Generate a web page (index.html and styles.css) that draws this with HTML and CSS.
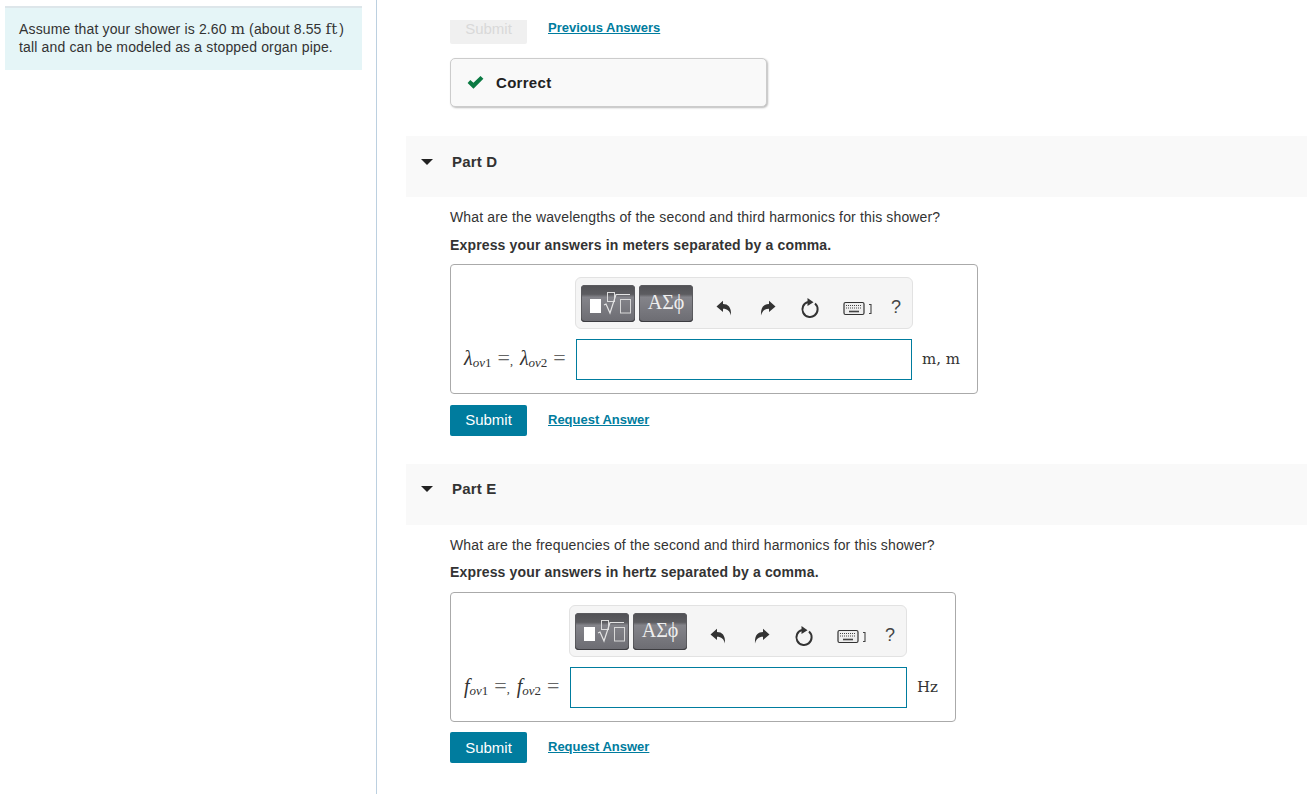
FILE: index.html
```html
<!DOCTYPE html>
<html lang="en">
<head>
  <meta charset="UTF-8" />
  <meta name="viewport" content="width=device-width, initial-scale=1" />
  <title>Standing Waves in a Shower</title>
  <link rel="stylesheet" href="styles.css">
</head>
<body>

  <svg class="defs" width="0" height="0" aria-hidden="true">
    <symbol id="i-templates" viewBox="0 0 54 37">
      <rect x="9" y="14" width="11" height="14" fill="#fff" />
      <rect x="26.5" y="7.5" width="7" height="9" fill="none" stroke="#dcdcdc" />
      <path d="M23 20 L25 19 L29 28 L35 9.5 H49" fill="none" stroke="#e4e4e4" stroke-width="1.2" />
      <rect x="39.5" y="14.5" width="10" height="13.5" fill="none" stroke="#d8d8d8" />
    </symbol>
    <symbol id="i-undo" viewBox="0 0 16 16">
      <path d="M0.5 6.5 L7 0.8 V4 C12 4 15.5 7 15 15.5 C13.6 11 11.5 8.8 7 8.8 V12 Z" fill="#333" />
    </symbol>
    <symbol id="i-redo" viewBox="0 0 16 16">
      <path d="M15.5 6.5 L9 0.8 V4 C4 4 .5 7 1 15.5 C2.4 11 4.5 8.8 9 8.8 V12 Z" fill="#333" />
    </symbol>
    <symbol id="i-reset" viewBox="0 0 20 22">
      <path d="M8 5 A7.6 7.6 0 1 0 15 6.6" fill="none" stroke="#333" stroke-width="2" />
      <path d="M7.5 1 L13.5 5.2 L7.5 9 Z" fill="#333" />
    </symbol>
    <symbol id="i-keyboard" viewBox="0 0 30 16">
      <rect x="1" y="1.5" width="20" height="12" rx="1.5" fill="#eee" stroke="#333" stroke-width="1.2" />
      <path d="M3 4.5 H19 M3 7 H19" stroke="#444" stroke-width="1.2" stroke-dasharray="1 1" />
      <path d="M6 10.5 H16" stroke="#444" stroke-width="1.6" />
      <path d="M26 3.5 H28 V12.5 H26" fill="none" stroke="#444" stroke-width="1.1" />
    </symbol>
  </svg>

  <div class="page">
    <aside class="sidebar">
      <div class="intro">
        <div>Assume that your shower is 2.60 <span class="unit">m</span> (about 8.55 <span class="unit">ft</span>)</div>
        <div>tall and can be modeled as a stopped organ pipe.</div>
      </div>
    </aside>

    <main class="main">
      <div class="main-inner">
        <div class="actions">
          <button class="btn btn-disabled" type="button">Submit</button>
          <a class="link" href="#">Previous Answers</a>
        </div>

        <div class="feedback">
          <svg class="check" width="17" height="13" viewBox="0 0 18 14" aria-hidden="true">
            <path d="M.5 7.5 L3.4 4.4 L6.8 7.4 L14.4 0 L17.5 3 L6.8 13.6 Z" fill="#0b7a43" />
          </svg>
          <span>Correct</span>
        </div>

        <section class="part part-d">
          <div class="part-head">
            <span class="caret"></span>
            <h2>Part D</h2>
          </div>
          <div class="part-body">
            <p class="question">What are the wavelengths of the second and third harmonics for this shower?</p>
            <p class="instruction">Express your answers in meters separated by a comma.</p>
            <div class="answer answer-d">
              <div class="toolbar">
                <button class="tool-btn" type="button"><svg width="54" height="37"><use href="#i-templates" /></svg></button>
                <button class="tool-btn tool-greek" type="button">ΑΣϕ</button>
                <div class="tool-icons">
                  <svg class="ic-undo" width="16" height="16"><use href="#i-undo" /></svg>
                  <svg class="ic-redo" width="16" height="16"><use href="#i-redo" /></svg>
                  <svg class="ic-reset" width="20" height="22"><use href="#i-reset" /></svg>
                  <svg class="ic-keyboard" width="30" height="16"><use href="#i-keyboard" /></svg>
                  <span class="help">?</span>
                </div>
              </div>
              <div class="math"><i>λ</i><sub><i>ov</i>1</sub><span class="eq">=</span><span class="comma">,</span><i class="next">λ</i><sub><i>ov</i>2</sub><span class="eq">=</span></div>
              <input class="answer-input" type="text" />
              <div class="units">m, m</div>
            </div>
            <div class="actions">
              <button class="btn" type="button">Submit</button>
              <a class="link" href="#">Request Answer</a>
            </div>
          </div>
        </section>

        <section class="part part-e">
          <div class="part-head">
            <span class="caret"></span>
            <h2>Part E</h2>
          </div>
          <div class="part-body">
            <p class="question">What are the frequencies of the second and third harmonics for this shower?</p>
            <p class="instruction">Express your answers in hertz separated by a comma.</p>
            <div class="answer answer-e">
              <div class="toolbar">
                <button class="tool-btn" type="button"><svg width="54" height="37"><use href="#i-templates" /></svg></button>
                <button class="tool-btn tool-greek" type="button">ΑΣϕ</button>
                <div class="tool-icons">
                  <svg class="ic-undo" width="16" height="16"><use href="#i-undo" /></svg>
                  <svg class="ic-redo" width="16" height="16"><use href="#i-redo" /></svg>
                  <svg class="ic-reset" width="20" height="22"><use href="#i-reset" /></svg>
                  <svg class="ic-keyboard" width="30" height="16"><use href="#i-keyboard" /></svg>
                  <span class="help">?</span>
                </div>
              </div>
              <div class="math"><i>f</i><sub><i>ov</i>1</sub><span class="eq">=</span><span class="comma">,</span><i class="next">f</i><sub><i>ov</i>2</sub><span class="eq">=</span></div>
              <input class="answer-input" type="text" />
              <div class="units">Hz</div>
            </div>
            <div class="actions">
              <button class="btn" type="button">Submit</button>
              <a class="link" href="#">Request Answer</a>
            </div>
          </div>
        </section>
      </div>
    </main>
  </div>

</body>
</html>
```

FILE: styles.css
```css
html, body {
  margin: 0;
  padding: 0;
  height: 100%;
  overflow: hidden;
  background: white;
}

body {
  font-family: 'Liberation Sans', Arial, sans-serif;
  font-size: 14px;
  color: #333;
}

.defs {
  display: block;
  height: 0;
}

.page {
  display: flex;
  height: 794px;
}

/* left column */
.sidebar {
  width: 377px;
  flex: none;
  box-sizing: border-box;
  padding: 6px 14px 0 5px;
  border-right: 1px solid #bcd0e0;
}

.intro {
  height: 36px;
  padding: 12px 14px 14px;
  background: #e5f5f7;
  border-top: 2px solid #dde6ea;
  line-height: 18px;
  letter-spacing: 0.15px;
}

.unit {
  font-family: 'DejaVu Serif', 'Liberation Serif', serif;
  font-size: 15px;
  line-height: 0;
  letter-spacing: 0;
}

.unit + .unit {
  padding-right: 2px;
}

/* right column, already scrolled a little */
.main {
  flex: 1;
  margin-top: 20px;
  overflow: hidden;
}

.main-inner {
  margin-top: -7px;
}

.actions {
  display: flex;
  align-items: center;
  gap: 21px;
  margin-left: 73px;
}

.part-body .actions {
  margin-left: 0;
}

.btn {
  width: 77px;
  height: 31px;
  padding: 0;
  border: none;
  border-radius: 2px;
  background: #007c9e;
  color: white;
  font: 15px 'Liberation Sans', Arial, sans-serif;
}

.part-d .btn {
  padding-bottom: 2px;
}

.btn-disabled {
  background: #f0f0f0;
  color: #d9d9d9;
}

.link {
  color: #007c9e;
  font-weight: bold;
  font-size: 13px;
  text-decoration: underline;
  position: relative;
  top: -1px;
}

.feedback {
  display: flex;
  align-items: center;
  gap: 12px;
  width: 317px;
  height: 49px;
  box-sizing: border-box;
  margin: 14px 0 0 73px;
  padding-left: 16px;
  background: #f9f9f9;
  border: 1px solid #ccc;
  border-radius: 5px;
  box-shadow: 1px 1px 2px #bbb;
  font-size: 15px;
  font-weight: bold;
  letter-spacing: 0.3px;
  color: #222;
}

.part {
  margin-left: 29px;
}

.part-d {
  margin-top: 29px;
}

.part-e {
  margin-top: 28px;
}

.part-head {
  display: flex;
  align-items: center;
  height: 61px;
  padding: 0 0 10px 15px;
  box-sizing: border-box;
  background: #f9f9f9;
}

.part-e .part-head {
  padding-bottom: 12px;
}

.part-head h2 {
  margin: 0 0 0 19px;
  font-size: 15px;
  font-weight: bold;
  letter-spacing: 0.2px;
  color: #333;
}

.caret {
  width: 0;
  height: 0;
  border-left: 6px solid transparent;
  border-right: 6px solid transparent;
  border-top: 6px solid #222;
}

.part-body {
  padding: 10px 0 0 44px;
}

.question {
  margin: 0;
  line-height: 20px;
  font-size: 14px;
  letter-spacing: 0.145px;
}

.instruction {
  margin: 8px 0 9px;
  line-height: 20px;
  font-size: 14px;
  font-weight: bold;
  letter-spacing: 0.15px;
}

.part-e .instruction {
  margin: 7px 0 10px;
}

/* answer box */
.answer {
  display: grid;
  grid-template-rows: 52px 41px;
  row-gap: 10px;
  align-items: center;
  box-sizing: border-box;
  height: 130px;
  padding-top: 12px;
  margin-bottom: 11px;
  background: white;
  border: 1px solid #aaa;
  border-radius: 4px;
}

.answer-d {
  width: 528px;
  grid-template-columns: 125px 336px 1fr;
}

.answer-e {
  width: 506px;
  grid-template-columns: 119px 337px 1fr;
}

.part-e .answer {
  margin-bottom: 10px;
}

.toolbar {
  grid-column: 2;
  grid-row: 1;
  display: flex;
  align-items: center;
  box-sizing: border-box;
  width: 338px;
  height: 52px;
  margin-left: -1px;
  padding: 0 5px;
  gap: 4px;
  background: #f5f5f5;
  border: 1px solid #e2e2e2;
  border-radius: 6px;
}

.tool-btn {
  width: 54px;
  height: 37px;
  padding: 0;
  border: none;
  border-radius: 4px;
  background: linear-gradient(#515155 0, #5c5c60 25%, #84848a 33%, #6c6c72 100%);
  box-shadow: inset 0 -1px 0 #3c3c40, inset 0 0 0 1px #5a5a5e;
}

.tool-btn svg {
  display: block;
}

.tool-greek {
  padding-bottom: 1px;
  color: #eee;
  font: 20px 'Liberation Serif', serif;
}

.tool-icons {
  position: relative;
  flex: 1;
  height: 100%;
}

.tool-icons svg,
.help {
  position: absolute;
}

.ic-undo { left: 19px; top: 22px; }
.ic-redo { left: 63px; top: 22px; }
.ic-reset { left: 103px; top: 19px; }
.ic-keyboard { left: 146px; top: 23px; }

.help {
  left: 194px;
  top: 19px;
  font-size: 18px;
  color: #444;
}

.math {
  grid-column: 1;
  grid-row: 2;
  padding: 0 0 2px 13px;
  font-family: 'Liberation Serif', serif;
  font-size: 20px;
  color: #333;
  white-space: nowrap;
}

.math sub {
  font-size: 13px;
  line-height: 0;
  vertical-align: -2px;
}

.eq {
  margin-left: 6px;
  font-size: 22px;
  line-height: 0;
  color: #666;
}

.comma {
  font-size: 12px;
}

.next {
  margin-left: 7px;
}

.answer-input {
  grid-column: 2;
  grid-row: 2;
  box-sizing: border-box;
  width: 100%;
  height: 41px;
  margin: 0;
  border: 1px solid #007c9e;
  background: white;
  outline: none;
}

.units {
  grid-column: 3;
  grid-row: 2;
  padding: 0 0 2px 10px;
  font-family: 'DejaVu Serif', 'Liberation Serif', serif;
  font-size: 15px;
  color: #333;
}
```
